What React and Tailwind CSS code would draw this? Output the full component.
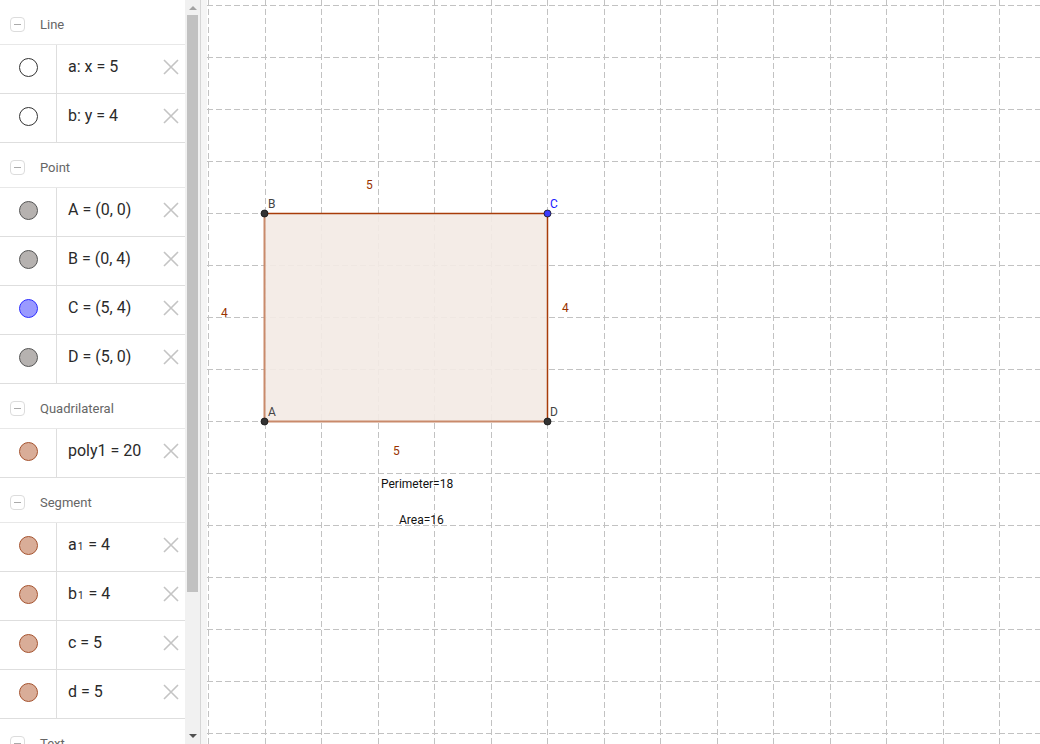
import { Fragment } from 'react';

const sections = [
    {
        title: 'Line',
        items: [
            { kind: 'line', label: <>a: x = 5</> },
            { kind: 'line', label: <>b: y = 4</> },
        ],
    },
    {
        title: 'Point',
        items: [
            { kind: 'point', label: <>A = (0, 0)</> },
            { kind: 'point', label: <>B = (0, 4)</> },
            { kind: 'blue', label: <>C = (5, 4)</> },
            { kind: 'point', label: <>D = (5, 0)</> },
        ],
    },
    {
        title: 'Quadrilateral',
        items: [{ kind: 'brown', label: <>poly1 = 20</> }],
    },
    {
        title: 'Segment',
        items: [
            { kind: 'brown', label: <>a<sub className="text-[10px] relative top-[2px] align-baseline ml-[1px] mr-[5px]">1</sub>= 4</> },
            { kind: 'brown', label: <>b<sub className="text-[10px] relative top-[2px] align-baseline ml-[1px] mr-[5px]">1</sub>= 4</> },
            { kind: 'brown', label: <>c = 5</> },
            { kind: 'brown', label: <>d = 5</> },
        ],
    },
    { title: 'Text', items: [] },
];

const dotStyles = {
    line: 'bg-white border-[#333]',
    point: 'bg-[#b6b2b0] border-[#555]',
    blue: 'bg-[#9a9aff] border-[#2b2bff]',
    brown: 'bg-[#d9ad98] border-[#a5532f]',
};

const SectionHeader = ({ title }) => (
    <div className="h-[45px] shrink-0 flex items-center pt-[5px] border-b border-[#e8e8e8]">
        <div className="ml-[10px] w-[15px] h-[15px] rounded-sm border border-[#dcdcdc] flex items-center justify-center">
            <div className="w-[7px] h-[1.5px] bg-[#aaa]" />
        </div>
        <span className="ml-[15px] text-[13px] text-[#666]">{title}</span>
    </div>
);

const ItemRow = ({ item }) => (
    <div className="h-[49px] shrink-0 flex border-b border-[#dedede]">
        <div className="w-[57px] shrink-0 border-r border-[#dedede] flex items-center justify-center pb-[4px]">
            <div className={`w-[19px] h-[19px] rounded-full border ${dotStyles[item.kind]}`} />
        </div>
        <div className="flex-1 flex items-center pl-[11px] pb-[4px] text-[16px] text-[#2a2a2a]">
            {item.label}
        </div>
        <div className="w-[16px] mr-[6px] flex items-center pb-[4px]">
            <svg width="16" height="16" viewBox="0 0 16 16">
                <path d="M1 1 L15 15 M15 1 L1 15" stroke="#c4c4c4" strokeWidth="1.6" fill="none" />
            </svg>
        </div>
    </div>
);

const ux = 56.5;
const uy = 52;
const ox = 264.5;
const oy = 421.5;

const Canvas = () => {
    const xs = [];
    for (let i = -1; i <= 13; i++) xs.push(Math.round(ox + ux * i) + 0.5);
    const ys = [];
    for (let j = -6; j <= 8; j++) ys.push(oy - uy * j);
    const A = [264.5, 421.5];
    const B = [264.5, 213.5];
    const C = [547.5, 213.5];
    const D = [547.5, 421.5];
    return (
        <svg width="833" height="744" viewBox="207 0 833 744" style={{ fontFamily: 'Roboto, "Liberation Sans", sans-serif' }}>
            <rect x="207" y="0" width="833" height="744" fill="#fff" />
            {xs.map((x) => (
                <line key={'x' + x} x1={x} y1="0" x2={x} y2="744" stroke="#c2c2c2" strokeWidth="1" strokeDasharray="6 3" />
            ))}
            {ys.map((y) => (
                <line key={'y' + y} x1="207" y1={y} x2="1040" y2={y} stroke="#c2c2c2" strokeWidth="1" strokeDasharray="6 3" />
            ))}
            <rect x={A[0]} y={B[1]} width={C[0] - B[0]} height={A[1] - B[1]} fill="#f3eae5" fillOpacity="0.92" />
            <line x1={A[0]} y1={A[1]} x2={B[0]} y2={B[1]} stroke="#c98a6b" strokeWidth="2" />
            <line x1={A[0]} y1={A[1]} x2={D[0]} y2={D[1]} stroke="#c98a6b" strokeWidth="2" />
            <line x1={B[0]} y1={B[1]} x2={C[0]} y2={C[1]} stroke="#a83c0a" strokeWidth="1.5" />
            <line x1={C[0]} y1={C[1]} x2={D[0]} y2={D[1]} stroke="#a83c0a" strokeWidth="1.5" />
            {[A, B, D].map((p, i) => (
                <circle key={i} cx={p[0]} cy={p[1]} r="3.5" fill="#333" stroke="#111" strokeWidth="0.8" />
            ))}
            <circle cx={C[0]} cy={C[1]} r="3.5" fill="#3c3cff" stroke="#111" strokeWidth="0.8" />
            <g fontSize="12" fill="#444">
                <text x="268" y="208">B</text>
                <text x="550" y="208" fill="#1a1aff">C</text>
                <text x="268" y="416">A</text>
                <text x="550" y="416">D</text>
            </g>
            <g fontSize="12" fill="#993300">
                <text x="366" y="189">5</text>
                <text x="221" y="317">4</text>
                <text x="562" y="312">4</text>
                <text x="393" y="455">5</text>
            </g>
            <g fontSize="12" fill="#111">
                <text x="381" y="488">Perimeter=18</text>
                <text x="399" y="524">Area=16</text>
            </g>
        </svg>
    );
};

const App = () => {
    return (
        <div className="w-[1040px] h-[744px] flex overflow-hidden bg-white" style={{ fontFamily: 'Roboto, "Liberation Sans", sans-serif' }}>
            <div className="w-[185px] h-[744px] shrink-0 flex flex-col overflow-hidden">
                {sections.map((section) => (
                    <Fragment key={section.title}>
                        <SectionHeader title={section.title} />
                        {section.items.map((item, i) => (
                            <ItemRow key={i} item={item} />
                        ))}
                    </Fragment>
                ))}
            </div>
            <div className="w-[15px] h-[744px] shrink-0 bg-[#f1f1f1] flex flex-col items-center">
                <div className="h-[15px] w-full flex items-center justify-center">
                    <div className="w-0 h-0 border-l-[4px] border-r-[4px] border-b-[4px] border-l-transparent border-r-transparent border-b-[#a3a3a3]" />
                </div>
                <div className="w-[11px] h-[577px] bg-[#c1c1c1]" />
                <div className="flex-1" />
                <div className="h-[17px] w-full flex items-center justify-center">
                    <div className="w-0 h-0 border-l-[4px] border-r-[4px] border-t-[4px] border-l-transparent border-r-transparent border-t-[#505050]" />
                </div>
            </div>
            <div className="w-[7px] h-[744px] shrink-0 bg-[#f5f5f5] border-l border-[#d6d6d6]" />
            <div className="flex-1 h-[744px] overflow-hidden">
                <Canvas />
            </div>
        </div>
    );
};

export default App;
